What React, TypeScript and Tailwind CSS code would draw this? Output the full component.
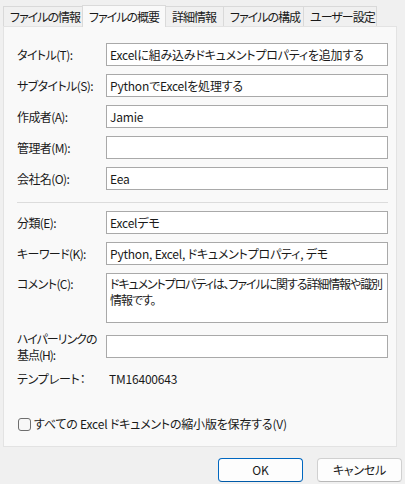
import React from 'react';

const font = "[font-family:'Noto_Sans_CJK_JP','Noto_Sans',sans-serif] [font-feature-settings:'palt']";

const tabs = [
  { label: 'ファイルの情報', w: 'w-[80px]' },
  { label: 'ファイルの概要', w: 'w-[84px]' },
  { label: '詳細情報', w: 'w-[59px]' },
  { label: 'ファイルの構成', w: 'w-[81px]' },
  { label: 'ユーザー設定', w: 'w-[74px]' },
];

function Field({ label, value, className = '' }: { label: React.ReactNode; value?: string; className?: string }) {
  return (
    <div className={`flex items-center h-[23px] ${className}`}>
      <div className="w-[89px] shrink-0 whitespace-nowrap tracking-[-0.6px]">{label}</div>
      <div className="w-[282px] h-[23px] bg-white border border-[#a9a9a9] px-[3px] flex items-center whitespace-nowrap overflow-hidden">
        {value}
      </div>
    </div>
  );
}

export default function App() {
  return (
    <div className={`w-[405px] h-[484px] bg-[#f0f0f0] text-[12px] leading-[16px] text-[#1a1a1a] tracking-[-0.2px] overflow-hidden ${font}`}>
      {/* Tabs */}
      <div className="flex items-end pl-[3px] pt-[4px] h-[26px] whitespace-nowrap tracking-[-1px]">
        {tabs.map((t, i) =>
          i === 1 ? (
            <div
              key={t.label}
              className={`${t.w} h-[22px] -ml-px pl-[6px] flex items-center bg-[#f9f9f9] border border-b-0 border-[#dadada] relative z-10 -mb-px overflow-hidden`}
            >
              {t.label}
            </div>
          ) : (
            <div
              key={t.label}
              className={`${t.w} h-[20px] pl-[6px] flex items-center border border-b-0 border-[#d9d9d9] bg-[#f0f0f0] -ml-px first:ml-0 overflow-hidden`}
            >
              {t.label}
            </div>
          )
        )}
      </div>

      {/* Panel */}
      <div className="ml-[3px] w-[394px] h-[421px] bg-[#f9f9f9] border border-[#e3e3e3] pt-[16px] pl-[13px]">
        <div className="flex flex-col gap-[8px]">
          <Field label="タイトル(T):" value="Excelに組み込みドキュメントプロパティを追加する" />
          <Field label="サブタイトル(S):" value="PythonでExcelを処理する" />
          <Field label="作成者(A):" value="Jamie" />
          <Field label="管理者(M):" />
          <Field label="会社名(O):" value="Eea" />
        </div>

        <div className="w-[371px] h-px bg-[#dcdcdc] mt-[12px] mb-[8px]" />

        <div className="flex flex-col gap-[8px]">
          <Field label="分類(E):" value="Excelデモ" />
          <Field label="キーワード(K):" value="Python, Excel, ドキュメントプロパティ, デモ" />
          <div className="flex items-start">
            <div className="w-[89px] shrink-0 pt-[3px] tracking-[-0.6px]">コメント(C):</div>
            <div className="w-[282px] h-[50px] bg-white border border-[#a9a9a9] px-[3px] pt-[2px] leading-[16px] whitespace-nowrap overflow-hidden tracking-[-1.1px]">
              <div>ドキュメントプロパティは、ファイルに関する詳細情報や識別</div>
              <div>情報です。</div>
            </div>
          </div>
          <Field
            className="mt-[4px]"
            label={
              <div className="tracking-[-1px]">
                ハイパーリンクの
                <br />
                基点(H):
              </div>
            }
          />
        </div>

        <div className="flex items-center mt-[13px] h-[16px]">
          <div className="w-[92px] shrink-0">テンプレート：</div>
          <div>TM16400643</div>
        </div>

        <div className="flex items-center mt-[29px] pl-[1px] gap-[3px] whitespace-nowrap">
          <div className="w-[13px] h-[13px] rounded-[3px] border border-[#6e6e6e] bg-[#f7f7f7]" />
          <div>すべての Excel ドキュメントの縮小版を保存する(V)</div>
        </div>
      </div>

      {/* Buttons */}
      <div className="flex justify-end gap-[14px] pr-[3px] mt-[11px]">
        <button className="w-[85px] h-[24px] rounded-[4px] bg-[#fdfdfd] border border-[#0067c0] border-b-[#005aa8] flex items-center justify-center">
          OK
        </button>
        <button className="w-[85px] h-[24px] rounded-[4px] bg-[#fdfdfd] border border-[#d0d0d0] border-b-[#b8b8b8] flex items-center justify-center">
          キャンセル
        </button>
      </div>
    </div>
  );
}
